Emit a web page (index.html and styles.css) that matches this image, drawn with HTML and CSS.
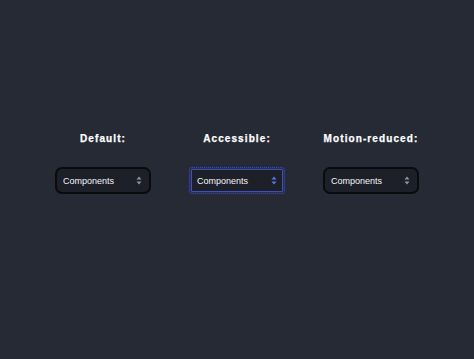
FILE: index.html
```html
<!DOCTYPE html>
<html>
<head>
<meta charset="utf-8">
<link rel="stylesheet" href="styles.css">
</head>
<body>
<main class="row">
  <section class="col">
    <h2 class="label">Default:</h2>
    <div class="select select-default">
      <span class="value">Components</span>
      <svg class="arrows" width="6" height="9" viewBox="0 0 6 9"><path d="M3 0.5 L5.5 3.5 H0.5 Z M3 8.5 L5.5 5.5 H0.5 Z" fill="#8a93a8"/></svg>
    </div>
  </section>
  <section class="col">
    <h2 class="label">Accessible:</h2>
    <div class="select select-access">
      <span class="value">Components</span>
      <svg class="arrows" width="6" height="9" viewBox="0 0 6 9"><path d="M3 0.5 L5.5 3.5 H0.5 Z M3 8.5 L5.5 5.5 H0.5 Z" fill="#5d74e8"/></svg>
    </div>
  </section>
  <section class="col">
    <h2 class="label">Motion-reduced:</h2>
    <div class="select select-default">
      <span class="value">Components</span>
      <svg class="arrows" width="6" height="9" viewBox="0 0 6 9"><path d="M3 0.5 L5.5 3.5 H0.5 Z M3 8.5 L5.5 5.5 H0.5 Z" fill="#8a93a8"/></svg>
    </div>
  </section>
</main>
</body>
</html>
```
FILE: styles.css
```css
html, body {
  margin: 0;
  padding: 0;
  background: #262a35;
  height: 100%;
}
.row {
  display: flex;
  justify-content: center;
  padding-top: 132px;
}
.col {
  width: 134px;
  display: flex;
  flex-direction: column;
  align-items: center;
}
.label {
  margin: 0;
  font-family: "Liberation Sans", Arial, sans-serif;
  font-weight: 700;
  font-size: 10px;
  letter-spacing: 1.1px;
  color: #ffffff;
  -webkit-text-stroke: 0.25px #ffffff;
  line-height: 14px;
  height: 14px;
}
.select {
  margin-top: 21px;
  width: 96px;
  height: 27px;
  box-sizing: border-box;
  display: flex;
  align-items: center;
  justify-content: space-between;
  padding: 0 7px 0 6px;
  background: #1d2029;
}
.select-default {
  border: 2.5px solid #0a0b0e;
  border-radius: 7px;
}
.select-access {
  border: 1px solid #3e4fb8;
  outline: 1px dotted #3a4aa8;
  outline-offset: 1px;
  border-radius: 1px;
  width: 92px;
  height: 23px;
  margin-top: 23px;
  padding: 0 5px 0 5px;
  box-shadow: 0 0 3px 2px rgba(50, 70, 180, 0.25);
}
.value {
  font-family: "Liberation Sans", Arial, sans-serif;
  font-size: 9px;
  color: #f4f5f7;
}
.arrows {
  display: block;
}
```
